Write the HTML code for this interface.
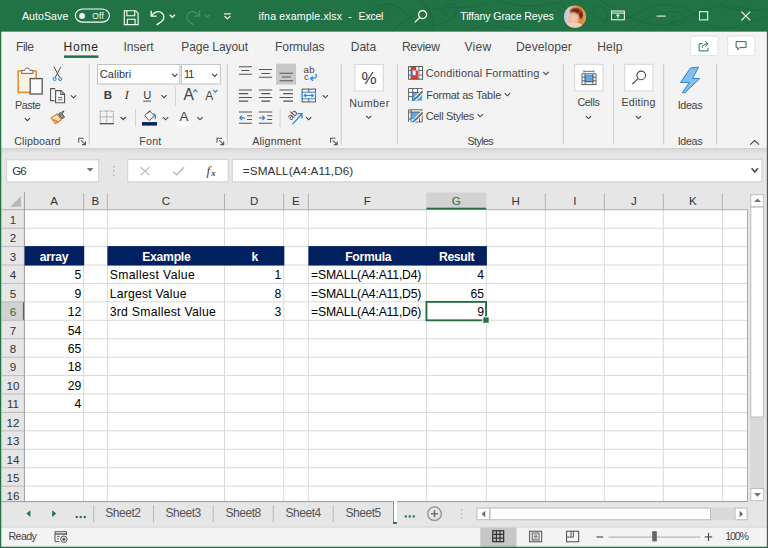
<!DOCTYPE html>
<html><head><meta charset="utf-8"><title>ifna example.xlsx - Excel</title>
<style>
html,body{margin:0;padding:0;}
body{width:768px;height:548px;overflow:hidden;background:#e6e6e6;font-family:"Liberation Sans",sans-serif;position:relative;}
.abs,.t{position:absolute;}
.t{white-space:pre;line-height:1;color:#444;font-size:11px;}
.gl{position:absolute;background:#d6d6d6;}
svg{position:absolute;overflow:visible;pointer-events:none;}
</style></head><body>

<svg style="left:0;top:0" width="768" height="548"><rect x="0.00" y="0.00" width="768.00" height="31.80" fill="#217346"/><g fill="none" stroke="#1d6a3f" stroke-width="1.2" opacity="0.85">
<path d="M368 14 C374 2 390 2 388 12 C386 22 372 20 378 9 C384 0 398 4 406 14 C414 24 430 30 446 22 C458 16 460 6 452 4 C444 2 440 12 448 16"/>
<path d="M392 31 C404 20 420 10 440 8 C462 6 476 10 486 2"/>
<path d="M420 0 C430 10 436 20 432 31"/>
<path d="M470 31 C480 22 500 26 520 30"/>
<path d="M500 0 C512 6 530 8 548 4 C556 2 562 4 566 8"/>
<path d="M584 26 C600 30 612 20 606 10 C600 2 590 6 594 14 C600 24 624 22 640 12 C652 4 668 2 684 8 C700 14 704 26 720 28 C740 30 752 18 768 16"/>
<path d="M600 0 C616 10 640 28 668 24 C690 20 700 6 724 6 C744 6 752 14 768 8"/>
<path d="M630 31 C640 22 652 14 668 12 C684 10 690 20 682 24 C674 28 668 20 676 16"/>
<path d="M716 0 C722 8 734 12 748 8"/>
</g></svg>
<div class="t" style="top:11px;font-size:10.6px;color:#fff;letter-spacing:0.050px;left:22.00px;">AutoSave</div>
<svg style="left:0;top:0" width="768" height="548"><rect x="75.35" y="8.95" width="34.10" height="13.20" rx="7.45" fill="none" stroke="#fff" stroke-width="1.1"/><rect x="79.20" y="13.00" width="5.80" height="5.80" rx="2.90" fill="#fff"/></svg>
<div class="t" style="top:12px;font-size:8.4px;color:#fff;letter-spacing:0.284px;left:92.30px;">Off</div>
<svg style="left:0;top:0" width="768" height="548"><g transform="translate(123.70 10.20)"><g fill="none" stroke="#fff" stroke-width="1.1"><path d="M0.6 0.6 H12 L14.4 3 V14.4 H0.6 Z"/><path d="M3.2 0.6 V5.6 H11 V0.6"/><path d="M3.6 14.4 V9 H11.4 V14.4"/></g></g><g transform="translate(150.00 9.50)"><g fill="none" stroke="#fff" stroke-width="1.3"><path d="M1.2 1.2 V6.6 H6.6"/><path d="M1.6 6.2 C4 2.2 9 1 12 3.6 C15 6.4 14 10 11.6 12 L6.6 15.4"/></g></g><path d="M169.60 14.70 L172.30 17.30 L175.00 14.70" fill="none" stroke="#fff" stroke-width="1.2"/><g transform="translate(185.50 9.50)"><g fill="none" stroke="#4c8d69" stroke-width="1.2"><path d="M14 1.2 V6.6 H8.6"/><path d="M13.6 6.2 C11.2 2.2 6.2 1 3.2 3.6 C0.2 6.4 1.2 10 3.6 12 L8.6 15.4"/></g></g><path d="M204.60 14.70 L207.30 17.30 L210.00 14.70" fill="none" stroke="#4c8d69" stroke-width="1.1"/><g transform="translate(224.00 13.30)"><path d="M0 0.6 H6.8" stroke="#fff" stroke-width="1.1"/><path d="M0.4 2.8 L3.4 5.4 L6.4 2.8" fill="none" stroke="#fff" stroke-width="1.2"/></g></svg>
<div class="t" style="top:11px;font-size:10.6px;color:#fff;letter-spacing:0.146px;left:258.50px;">ifna example.xlsx</div>
<div class="t" style="top:11px;font-size:10.6px;color:#fff;left:348.30px;">-</div>
<div class="t" style="top:11px;font-size:10.6px;color:#fff;letter-spacing:-0.277px;left:358.60px;">Excel</div>
<svg style="left:0;top:0" width="768" height="548"><g transform="translate(414.30 9.90)"><g fill="none" stroke="#fff" stroke-width="1.2"><circle cx="8.3" cy="4.7" r="4"/><path d="M5.4 7.6 L0.5 12.5"/></g></g></svg>
<div class="t" style="top:11px;font-size:10.6px;color:#fff;letter-spacing:-0.132px;left:460.20px;">Tiffany Grace Reyes</div>
<svg style="left:0;top:0" width="768" height="548"><defs><clipPath id="avc"><circle cx="575" cy="16.7" r="11.1"/></clipPath>
<linearGradient id="avbg" x1="0" x2="1" y1="0" y2="0"><stop offset="0" stop-color="#aeb9d6"/><stop offset="0.22" stop-color="#d9d3d6"/><stop offset="0.45" stop-color="#e2a283"/><stop offset="0.72" stop-color="#dd7f35"/><stop offset="1" stop-color="#e7a45c"/></linearGradient>
<radialGradient id="avface"><stop offset="0" stop-color="#f3cdb9"/><stop offset="0.6" stop-color="#eeb9a0"/><stop offset="1" stop-color="#e9a98c" stop-opacity="0"/></radialGradient>
<radialGradient id="avhair"><stop offset="0" stop-color="#4a1c14"/><stop offset="0.6" stop-color="#7a2c1a" stop-opacity="0.9"/><stop offset="1" stop-color="#a84a22" stop-opacity="0"/></radialGradient></defs>
<g clip-path="url(#avc)"><rect x="563" y="5" width="24" height="24" fill="url(#avbg)"/>
<ellipse cx="575.5" cy="11.2" rx="7" ry="4.2" fill="url(#avhair)"/><ellipse cx="581" cy="15" rx="2.6" ry="5" fill="url(#avhair)"/>
<ellipse cx="573.6" cy="18.6" rx="6.4" ry="8" fill="url(#avface)"/><ellipse cx="574.5" cy="26" rx="8" ry="3.4" fill="#f1cdbd"/></g><g transform="translate(611.00 10.50)"><g fill="none" stroke="#fff" stroke-width="1"><rect x="0.5" y="0.5" width="12.8" height="8.8"/><path d="M0.5 2.6 H13.3"/><path d="M6.9 8 V4 M5 5.8 L6.9 3.9 L8.8 5.8"/></g></g><rect x="656.50" y="15.60" width="9.20" height="1.00" fill="#fff"/><rect x="699.50" y="11.70" width="8.20" height="8.20" rx="0.00" fill="none" stroke="#fff" stroke-width="1.0"/><g transform="translate(741.00 11.20)"><path d="M0.4 0.4 L9.2 9.2 M9.2 0.4 L0.4 9.2" stroke="#fff" stroke-width="1.1" fill="none"/></g><rect x="0.00" y="31.80" width="768.00" height="116.40" fill="#f3f3f3"/></svg>
<div class="abs" style="left:0;top:148px;width:768px;height:5px;background:linear-gradient(#d0d0d0,#dadada 40%,#e6e6e6);"></div>
<div class="t" style="top:41px;font-size:12.1px;color:#4a4a4a;letter-spacing:-0.567px;left:16.10px;">File</div>
<div class="t" style="top:41px;font-size:12.1px;color:#262626;letter-spacing:0.745px;left:63.60px;">Home</div>
<div class="t" style="top:41px;font-size:12.1px;color:#4a4a4a;letter-spacing:-0.010px;left:123.40px;">Insert</div>
<div class="t" style="top:41px;font-size:12.1px;color:#4a4a4a;letter-spacing:-0.112px;left:181.30px;">Page Layout</div>
<div class="t" style="top:41px;font-size:12.1px;color:#4a4a4a;letter-spacing:-0.115px;left:275.00px;">Formulas</div>
<div class="t" style="top:41px;font-size:12.1px;color:#4a4a4a;letter-spacing:-0.016px;left:350.70px;">Data</div>
<div class="t" style="top:41px;font-size:12.1px;color:#4a4a4a;letter-spacing:-0.311px;left:401.90px;">Review</div>
<div class="t" style="top:41px;font-size:12.1px;color:#4a4a4a;letter-spacing:0.267px;left:464.40px;">View</div>
<div class="t" style="top:41px;font-size:12.1px;color:#4a4a4a;letter-spacing:0.097px;left:516.00px;">Developer</div>
<div class="t" style="top:41px;font-size:12.1px;color:#4a4a4a;letter-spacing:0.142px;left:597.20px;">Help</div>
<svg style="left:0;top:0" width="768" height="548"><rect x="64.00" y="55.40" width="34.50" height="2.50" fill="#217346"/><rect x="690.70" y="36.10" width="27.30" height="19.60" rx="1.50" fill="#fff" stroke="#e1e1e1" stroke-width="1.0"/><rect x="727.70" y="36.10" width="27.30" height="19.60" rx="1.50" fill="#fff" stroke="#e1e1e1" stroke-width="1.0"/><g transform="translate(698.50 40.50)"><g fill="none" stroke="#217346" stroke-width="1"><path d="M4.2 3.2 H0.6 V10.4 H9.4 V7.2"/><path d="M3.6 7.6 C4 4.6 6 3.4 8.4 3.4 M6.6 0.8 L9.4 3.4 L6.6 6"/></g></g><g transform="translate(735.50 41.00)"><path d="M0.6 0.6 H10.6 V6.6 H4.2 L2.2 8.8 V6.6 H0.6 Z" fill="none" stroke="#217346" stroke-width="1"/></g><rect x="88.60" y="63.70" width="1.25" height="80.90" fill="#d1d1d1"/><rect x="226.80" y="63.70" width="1.25" height="80.90" fill="#d1d1d1"/><rect x="340.70" y="63.70" width="1.25" height="80.90" fill="#d1d1d1"/><rect x="396.80" y="63.70" width="1.25" height="80.90" fill="#d1d1d1"/><rect x="562.80" y="63.70" width="1.25" height="80.90" fill="#d1d1d1"/><rect x="613.00" y="63.70" width="1.25" height="80.90" fill="#d1d1d1"/><rect x="662.90" y="63.70" width="1.25" height="80.90" fill="#d1d1d1"/><rect x="715.90" y="63.70" width="1.25" height="80.90" fill="#d1d1d1"/></svg>
<div class="t" style="top:136px;font-size:10.7px;color:#444;letter-spacing:0.056px;left:14.30px;">Clipboard</div>
<div class="t" style="top:136px;font-size:10.7px;color:#444;letter-spacing:0.203px;left:139.30px;">Font</div>
<div class="t" style="top:136px;font-size:10.7px;color:#444;letter-spacing:0.134px;left:252.30px;">Alignment</div>
<div class="t" style="top:136px;font-size:10.7px;color:#444;letter-spacing:-0.622px;left:467.60px;">Styles</div>
<div class="t" style="top:136px;font-size:10.7px;color:#444;letter-spacing:-0.339px;left:677.70px;">Ideas</div>
<svg style="left:0;top:0" width="768" height="548"><g transform="translate(78.20 137.80)"><g fill="none" stroke="#585858" stroke-width="1.05"><path d="M0.5 5 V0.5 H5.5"/><path d="M2.8 2.6 L7 6.6 M7.2 3.4 V6.8 H3.8"/></g></g><g transform="translate(216.50 137.80)"><g fill="none" stroke="#585858" stroke-width="1.05"><path d="M0.5 5 V0.5 H5.5"/><path d="M2.8 2.6 L7 6.6 M7.2 3.4 V6.8 H3.8"/></g></g><g transform="translate(330.00 137.80)"><g fill="none" stroke="#585858" stroke-width="1.05"><path d="M0.5 5 V0.5 H5.5"/><path d="M2.8 2.6 L7 6.6 M7.2 3.4 V6.8 H3.8"/></g></g><g transform="translate(749.80 140.00)"><path d="M0.4 4.6 L4.8 0.6 L9.2 4.6" fill="none" stroke="#444" stroke-width="1.1"/></g><g transform="translate(17.00 67.00)"><path d="M1.2 4 H19.2 V25.4 H1.2 Z" fill="#fdf3e4" stroke="#e8912d" stroke-width="1.6"/>
<path d="M4.6 6.4 V3.4 H7.6 C7.8 0.2 12.8 0.2 13 3.4 H16 V6.4 Z" fill="#f6f6f6" stroke="#6a6a6a" stroke-width="1"/>
<rect x="13.2" y="11.6" width="12" height="15.4" fill="#fafafa" stroke="#555" stroke-width="1.3"/></g></svg>
<div class="t" style="top:100px;font-size:10.7px;color:#444;letter-spacing:-0.386px;left:15.00px;">Paste</div>
<svg style="left:0;top:0" width="768" height="548"><path d="M24.80 118.15 L27.40 120.65 L30.00 118.15" fill="none" stroke="#444" stroke-width="1.1"/><g transform="translate(52.00 66.30)"><g fill="none" stroke="#555" stroke-width="1"><path d="M2 0.4 L7.6 11.2 M8.8 0.4 L3.2 11.2"/></g><g fill="#cfe6f7" stroke="#2b88d8" stroke-width="1"><circle cx="2.6" cy="12.7" r="1.6"/><circle cx="8.2" cy="12.7" r="1.6"/></g></g><g transform="translate(50.00 88.00)"><g fill="#f8f8f8" stroke="#555" stroke-width="1.1"><path d="M4.6 1.6 V0.6 H0.6 V12.6 H4.6"/><path d="M5.6 2.6 H11 L14.6 6.2 V14.8 H5.6 Z"/><path d="M10.8 2.8 V6.4 H14.4" fill="none"/><path d="M8 9.6 H12.4 M8 11.8 H12.4" fill="none" stroke-width="0.9"/></g></g><path d="M70.90 95.35 L73.50 97.85 L76.10 95.35" fill="none" stroke="#444" stroke-width="1.1"/><g transform="translate(50.00 110.50)"><path d="M1 7.4 L7 3.4 L11.4 9.4 L5.4 13.2 Z" fill="#fbe3c7" stroke="#e8822d" stroke-width="1.2"/><path d="M3.4 9 L8.6 12" stroke="#e8822d" stroke-width="1.6" fill="none"/>
<path d="M8.4 3.6 L11 1.8 L14.6 6.6 L12 8.4 Z" fill="#8a8a8a" stroke="#555" stroke-width="0.9"/><path d="M12 2 L14 0.6" stroke="#555" stroke-width="1.6"/></g><rect x="97.50" y="64.50" width="82.40" height="19.50" rx="0.00" fill="#fff" stroke="#c4c4c4" stroke-width="1.0"/><rect x="181.50" y="64.50" width="38.80" height="19.50" rx="0.00" fill="#fff" stroke="#c4c4c4" stroke-width="1.0"/></svg>
<div class="t" style="top:69px;font-size:10.899999999999999px;color:#333;letter-spacing:0.087px;left:99.80px;">Calibri</div>
<svg style="left:0;top:0" width="768" height="548"><path d="M172.20 73.90 L174.80 76.50 L177.40 73.90" fill="none" stroke="#444" stroke-width="1.1"/></svg>
<div class="t" style="top:69px;font-size:10.899999999999999px;color:#333;letter-spacing:-1.113px;left:184.00px;">11</div>
<svg style="left:0;top:0" width="768" height="548"><path d="M212.10 73.90 L214.70 76.50 L217.30 73.90" fill="none" stroke="#444" stroke-width="1.1"/></svg>
<div class="t" style="top:90px;font-size:11.5px;color:#3b3b3b;font-weight:bold;left:103.80px;">B</div>
<div class="t" style="top:88px;font-size:13.2px;color:#3b3b3b;font-family:'Liberation Serif',serif;font-style:italic;left:124.40px;">I</div>
<div class="t" style="top:90px;font-size:11.2px;color:#3b3b3b;left:143.20px;">U</div>
<svg style="left:0;top:0" width="768" height="548"><rect x="143.20" y="100.60" width="7.80" height="1.00" fill="#555"/><path d="M161.50 95.10 L164.10 97.70 L166.70 95.10" fill="none" stroke="#444" stroke-width="1.1"/><rect x="175.00" y="87.00" width="1.00" height="18.50" fill="#d2d2d2"/></svg>
<div class="t" style="top:87px;font-size:15.6px;color:#444;left:183.50px;">A</div>
<svg style="left:0;top:0" width="768" height="548"><g transform="translate(193.00 89.40)"><path d="M0.4 2.7 L2.4 0.5 L4.4 2.7" fill="none" stroke="#2b88d8" stroke-width="1.2"/></g></svg>
<div class="t" style="top:90px;font-size:12px;color:#444;left:205.20px;">A</div>
<svg style="left:0;top:0" width="768" height="548"><g transform="translate(213.00 89.60)"><path d="M0.4 0.4 L2.4 2.6 L4.4 0.4" fill="none" stroke="#2b88d8" stroke-width="1.2"/></g><g transform="translate(99.70 110.50)"><g stroke="#8c8c8c" stroke-width="1" stroke-dasharray="1.2 0.9" fill="none"><path d="M0.5 0.5 H13.6 M0.5 0.5 V12 M13.6 0.5 V12 M7 0.5 V12 M0.5 6.4 H13.6"/></g><path d="M0 13.2 H14.2" stroke="#444" stroke-width="1.2"/></g><path d="M120.60 117.00 L123.20 119.60 L125.80 117.00" fill="none" stroke="#444" stroke-width="1.1"/><rect x="135.00" y="109.00" width="1.00" height="18.00" fill="#d2d2d2"/><g transform="translate(142.00 110.30)"><path d="M7.6 0.6 L12.6 5.6 L7.2 10.2 L2.6 5.4 Z" fill="#fafafa" stroke="#555" stroke-width="1"/><path d="M5.4 2.6 L8.8 0.6" stroke="#555" stroke-width="1" fill="none"/>
<path d="M11.6 3.4 C13.4 4.6 13.8 6.6 13.2 8.6" fill="none" stroke="#2b88d8" stroke-width="1.5"/>
<rect x="0" y="11.8" width="15" height="3.5" fill="#002060"/></g><path d="M163.00 117.20 L165.60 119.80 L168.20 117.20" fill="none" stroke="#444" stroke-width="1.1"/></svg>
<div class="t" style="top:110px;font-size:13.4px;color:#444;left:179.40px;">A</div>
<svg style="left:0;top:0" width="768" height="548"><rect x="176.50" y="122.00" width="14.50" height="3.50" fill="#fff"/><path d="M197.40 117.20 L200.00 119.80 L202.60 117.20" fill="none" stroke="#444" stroke-width="1.1"/><path d="M238.90 66.75 H252.00 M241.40 70.50 H249.50 M238.90 74.25 H252.00 " stroke="#555" stroke-width="1.05" fill="none"/><path d="M258.90 69.50 H272.20 M261.40 73.50 H270.10 M258.90 77.30 H272.20 " stroke="#555" stroke-width="1.05" fill="none"/><rect x="276.00" y="63.70" width="20.00" height="20.80" fill="#c8c8c8"/><path d="M279.50 73.20 H293.00 M282.00 77.00 H290.70 M279.50 80.70 H293.00 " stroke="#555" stroke-width="1.05" fill="none"/></svg>
<div class="t" style="top:65px;font-size:9.6px;color:#444;letter-spacing:0.328px;left:303.60px;">ab</div>
<div class="t" style="top:72px;font-size:9.6px;color:#444;left:303.90px;">c</div>
<svg style="left:0;top:0" width="768" height="548"><g transform="translate(309.40 73.60)"><path d="M6.2 0.4 C8 2.6 7 5 1.4 5 M3.6 2.8 L1.2 5 L3.6 7.2" fill="none" stroke="#2b88d8" stroke-width="1.3"/></g><path d="M238.90 89.90 H252.00 M238.90 93.60 H248.20 M238.90 97.40 H252.00 M238.90 101.10 H248.20 " stroke="#555" stroke-width="1.05" fill="none"/><path d="M258.90 89.90 H272.20 M261.40 93.60 H270.10 M258.90 97.40 H272.20 M261.40 101.10 H270.10 " stroke="#555" stroke-width="1.05" fill="none"/><path d="M279.50 89.90 H293.00 M283.20 93.60 H293.00 M279.50 97.40 H293.00 M283.20 101.10 H293.00 " stroke="#555" stroke-width="1.05" fill="none"/><g transform="translate(301.70 88.60)"><rect x="0.5" y="0.5" width="13.3" height="12.8" fill="#f8f8f8" stroke="#555" stroke-width="1"/><rect x="0.5" y="3.6" width="13.3" height="6.6" fill="#eaf3fb" stroke="#2b88d8" stroke-width="1"/><path d="M7.1 0.5 V3.4 M7.1 10.4 V13.2" stroke="#555" stroke-width="1"/><path d="M2.6 6.9 H11.6 M4.4 5.2 L2.6 6.9 L4.4 8.6 M9.8 5.2 L11.6 6.9 L9.8 8.6" fill="none" stroke="#2b88d8" stroke-width="1.1"/></g><path d="M322.70 95.20 L325.30 97.80 L327.90 95.20" fill="none" stroke="#444" stroke-width="1.1"/><path d="M238.90 112.00 H252.00 M247.00 115.75 H252.00 M247.00 119.50 H252.00 M238.90 123.25 H252.00 " stroke="#555" stroke-width="1.05" fill="none"/><g transform="translate(239.20 115.20)"><path d="M0.6 2.6 H6 M2.8 0.4 L0.6 2.6 L2.8 4.8" fill="none" stroke="#2b88d8" stroke-width="1.2"/></g><path d="M258.90 112.00 H272.20 M267.20 115.75 H272.20 M267.20 119.50 H272.20 M258.90 123.25 H272.20 " stroke="#555" stroke-width="1.05" fill="none"/><g transform="translate(259.20 115.20)"><path d="M0 2.6 H5.4 M3.2 0.4 L5.4 2.6 L3.2 4.8" fill="none" stroke="#2b88d8" stroke-width="1.2"/></g><rect x="279.60" y="109.00" width="1.00" height="18.00" fill="#d2d2d2"/></svg>
<div class="t" style="left:286.6px;top:110.4px;font-size:9.4px;color:#444;transform:rotate(-48deg);transform-origin:50% 50%;letter-spacing:-0.2px;">ab</div>
<svg style="left:0;top:0" width="768" height="548"><g transform="translate(292.00 112.80)"><path d="M0.4 11.6 L9.8 1.2 M5.4 0.9 H10 V5.6" fill="none" stroke="#2b88d8" stroke-width="1.25"/></g><path d="M306.10 117.20 L308.70 119.80 L311.30 117.20" fill="none" stroke="#444" stroke-width="1.1"/><rect x="354.90" y="64.40" width="28.40" height="26.60" rx="0.00" fill="#fff" stroke="#d4d4d4" stroke-width="1.0"/></svg>
<div class="t" style="top:70px;font-size:17px;color:#3a3a3a;letter-spacing:0.000px;left:361.40px;">%</div>
<div class="t" style="top:98px;font-size:10.7px;color:#444;letter-spacing:0.397px;left:349.20px;">Number</div>
<svg style="left:0;top:0" width="768" height="548"><path d="M366.10 115.85 L368.70 118.35 L371.30 115.85" fill="none" stroke="#444" stroke-width="1.1"/><g transform="translate(408.10 66.10)"><rect x="0.5" y="0.5" width="14" height="12.6" fill="#fafafa"/>
<rect x="3.0" y="0.5" width="4.6" height="3.9" fill="#e8363d"/><rect x="3.0" y="9.0" width="6.9" height="4.1" fill="#e8363d"/><rect x="7.5" y="4.4" width="2.4" height="4.7" fill="#e8363d"/><rect x="3.0" y="4.4" width="1.7" height="4.6" fill="#2b88d8"/>
<g fill="none" stroke="#4f4f4f" stroke-width="0.95"><rect x="0.5" y="0.5" width="14" height="12.6"/><path d="M3.0 0.5 V13.1 M10.8 0.5 V13.1 M0.5 4.4 H3.0 M0.5 9.0 H3.0 M10.8 4.4 H14.5 M10.8 9.0 H14.5 M7.6 0.5 V4.4" stroke-width="0.8"/></g></g></svg>
<div class="t" style="top:68px;font-size:10.899999999999999px;color:#444;letter-spacing:0.182px;left:425.80px;">Conditional Formatting</div>
<svg style="left:0;top:0" width="768" height="548"><path d="M543.30 72.00 L546.00 74.60 L548.70 72.00" fill="none" stroke="#444" stroke-width="1.1"/><g transform="translate(408.10 88.00)"><rect x="0.5" y="0.5" width="13.6" height="12.2" fill="#fafafa"/><rect x="4.6" y="4.4" width="9.5" height="8.3" fill="#5ea8e6"/>
<g fill="none" stroke="#555" stroke-width="0.9"><path d="M0.5 12.7 V0.5 H14.1 V4.4 M0.5 4.4 H14.1 M4.6 0.5 V12.7 M9.4 0.5 V4.4 M0.5 8.6 H4.6"/></g>
<path d="M14.2 3.6 L7.6 10.4" stroke="#fafafa" stroke-width="3.8" stroke-linecap="round"/><path d="M14.0 3.8 L8.4 9.6" stroke="#6a6a6a" stroke-width="1.9" stroke-linecap="round"/><path d="M8.8 10.4 L5.6 12.9 L3.2 13.2 L5.6 10.6 L7.4 8.8 Z" fill="#2b88d8"/></g></svg>
<div class="t" style="top:90px;font-size:10.899999999999999px;color:#444;letter-spacing:-0.206px;left:426.20px;">Format as Table</div>
<svg style="left:0;top:0" width="768" height="548"><path d="M504.70 93.20 L507.40 95.80 L510.10 93.20" fill="none" stroke="#444" stroke-width="1.1"/><g transform="translate(408.10 109.25)"><rect x="0.5" y="0.5" width="13.6" height="12.2" fill="#fafafa"/><rect x="3" y="2.8" width="8.4" height="7" fill="#5ea8e6"/>
<g fill="none" stroke="#555" stroke-width="0.9"><path d="M0.5 12.7 V0.5 H14.1 V12.7 H7 M0.5 2.8 H14.1 M3 0.5 V12.7 M11.4 2.8 V12.7 M0.5 9.8 H3"/></g>
<path d="M14.2 3.6 L7.6 10.4" stroke="#fafafa" stroke-width="3.8" stroke-linecap="round"/><path d="M14.0 3.8 L8.4 9.6" stroke="#6a6a6a" stroke-width="1.9" stroke-linecap="round"/><path d="M8.8 10.4 L5.6 12.9 L3.2 13.2 L5.6 10.6 L7.4 8.8 Z" fill="#2b88d8"/></g></svg>
<div class="t" style="top:111px;font-size:10.899999999999999px;color:#444;letter-spacing:-0.305px;left:425.80px;">Cell Styles</div>
<svg style="left:0;top:0" width="768" height="548"><path d="M477.50 114.20 L480.20 116.80 L482.90 114.20" fill="none" stroke="#444" stroke-width="1.1"/><rect x="574.70" y="64.30" width="28.20" height="26.70" rx="0.00" fill="#fff" stroke="#d4d4d4" stroke-width="1.0"/><g transform="translate(581.50 70.20)"><path d="M2.4 1.2 H12.4 M2.4 0 V2.4 M12.4 0 V2.4" stroke="#2b88d8" stroke-width="1" fill="none"/>
<rect x="0.5" y="3.6" width="14" height="10.8" fill="#fafafa" stroke="#555" stroke-width="0.9"/><rect x="3.6" y="5" width="7.8" height="6.4" fill="#5ea8e6" stroke="#2b88d8" stroke-width="0.8"/>
<path d="M3.6 3.6 V14.4 M11.4 3.6 V14.4 M0.5 7 H3.6 M0.5 10.6 H3.6 M11.4 7 H14.5 M11.4 10.6 H14.5 M3.6 11.6 H11.4" stroke="#555" stroke-width="0.9" fill="none"/></g></svg>
<div class="t" style="top:97px;font-size:10.7px;color:#444;letter-spacing:-0.341px;left:577.40px;">Cells</div>
<svg style="left:0;top:0" width="768" height="548"><path d="M585.90 116.05 L588.50 118.55 L591.10 116.05" fill="none" stroke="#444" stroke-width="1.1"/><rect x="624.70" y="64.30" width="28.20" height="26.70" rx="0.00" fill="#fff" stroke="#d4d4d4" stroke-width="1.0"/><g transform="translate(631.80 70.40)"><g fill="none" stroke="#444" stroke-width="1.1"><circle cx="9.4" cy="5" r="4.3"/><path d="M6.3 8.2 L0.6 13.6"/></g></g></svg>
<div class="t" style="top:97px;font-size:10.7px;color:#444;letter-spacing:0.219px;left:621.40px;">Editing</div>
<svg style="left:0;top:0" width="768" height="548"><path d="M635.80 116.05 L638.40 118.55 L641.00 116.05" fill="none" stroke="#444" stroke-width="1.1"/><path d="M690.5 68 L698.6 67.1 L692.6 78.5 L699.8 78.5 L685 92.7 L682.3 92.7 L689.3 82.5 L680.5 82.5 Z" fill="#83beec" stroke="#2b88d8" stroke-width="1" stroke-linejoin="round"/></svg>
<div class="t" style="top:100px;font-size:10.7px;color:#444;letter-spacing:-0.339px;left:677.70px;">Ideas</div>
<svg style="left:0;top:0" width="768" height="548"><rect x="6.70" y="159.80" width="92.00" height="22.00" rx="0.00" fill="#fff" stroke="#d0d0d0" stroke-width="1.0"/></svg>
<div class="t" style="top:165px;font-size:11.6px;color:#333;letter-spacing:-0.869px;left:12.20px;">G6</div>
<svg style="left:0;top:0" width="768" height="548"><g transform="translate(86.70 168.10)"><path d="M0 0 H6.8 L3.4 3.7 Z" fill="#777"/></g><rect x="113.00" y="165.90" width="1.60" height="1.60" rx="0.80" fill="#a8a8a8"/><rect x="113.00" y="170.20" width="1.60" height="1.60" rx="0.80" fill="#a8a8a8"/><rect x="113.00" y="174.50" width="1.60" height="1.60" rx="0.80" fill="#a8a8a8"/><rect x="127.70" y="159.30" width="100.50" height="22.50" rx="0.00" fill="#fff" stroke="#d0d0d0" stroke-width="1.0"/><g transform="translate(140.20 166.70)"><path d="M0.4 0.4 L9.2 8.4 M9.2 0.4 L0.4 8.4" stroke="#b4b4b4" stroke-width="1.2" fill="none"/></g><g transform="translate(172.70 166.70)"><path d="M0.5 5 L4 8.2 L11.4 0.5" stroke="#b4b4b4" stroke-width="1.3" fill="none"/></g></svg>
<div class="t" style="top:164px;font-size:13.4px;color:#444;font-family:'Liberation Serif',serif;font-style:italic;left:206.60px;">f</div>
<div class="t" style="top:169px;font-size:8.6px;color:#444;font-family:'Liberation Serif',serif;font-weight:bold;font-style:italic;left:211.20px;">x</div>
<svg style="left:0;top:0" width="768" height="548"><rect x="232.30" y="159.30" width="529.50" height="22.50" rx="0.00" fill="#fff" stroke="#d0d0d0" stroke-width="1.0"/></svg>
<div class="t" style="top:165px;font-size:11.7px;color:#333;letter-spacing:0.113px;left:242.80px;">=SMALL(A4:A11,D6)</div>
<svg style="left:0;top:0" width="768" height="548"><path d="M751.60 168.30 L754.80 171.90 L758.00 168.30" fill="none" stroke="#555" stroke-width="1.7"/><rect x="24.50" y="209.70" width="723.00" height="291.70" fill="#fff"/><g transform="translate(9.60 195.40)"><path d="M11.4 0.6 V11.4 H0.6 Z" fill="#b8b8b8"/></g><rect x="426.30" y="192.50" width="60.00" height="17.20" fill="#d2d2d2"/><rect x="426.30" y="207.70" width="60.00" height="2.00" fill="#217346"/><rect x="1.50" y="301.85" width="23.00" height="18.43" fill="#d2d2d2"/><rect x="22.90" y="301.85" width="2.00" height="18.43" fill="#217346"/><rect x="83.10" y="209.70" width="1.00" height="291.70" fill="#d9d9d9"/><rect x="106.80" y="209.70" width="1.00" height="291.70" fill="#d9d9d9"/><rect x="224.00" y="209.70" width="1.00" height="291.70" fill="#d9d9d9"/><rect x="283.20" y="209.70" width="1.00" height="291.70" fill="#d9d9d9"/><rect x="307.80" y="209.70" width="1.00" height="291.70" fill="#d9d9d9"/><rect x="425.80" y="209.70" width="1.00" height="291.70" fill="#d9d9d9"/><rect x="485.80" y="209.70" width="1.00" height="291.70" fill="#d9d9d9"/><rect x="544.80" y="209.70" width="1.00" height="291.70" fill="#d9d9d9"/><rect x="603.80" y="209.70" width="1.00" height="291.70" fill="#d9d9d9"/><rect x="662.80" y="209.70" width="1.00" height="291.70" fill="#d9d9d9"/><rect x="721.80" y="209.70" width="1.00" height="291.70" fill="#d9d9d9"/><rect x="24.00" y="193.50" width="1.00" height="16.20" fill="#b2b2b2"/><rect x="83.10" y="193.50" width="1.00" height="16.20" fill="#b2b2b2"/><rect x="106.80" y="193.50" width="1.00" height="16.20" fill="#b2b2b2"/><rect x="224.00" y="193.50" width="1.00" height="16.20" fill="#b2b2b2"/><rect x="283.20" y="193.50" width="1.00" height="16.20" fill="#b2b2b2"/><rect x="307.80" y="193.50" width="1.00" height="16.20" fill="#b2b2b2"/><rect x="544.80" y="193.50" width="1.00" height="16.20" fill="#b2b2b2"/><rect x="603.80" y="193.50" width="1.00" height="16.20" fill="#b2b2b2"/><rect x="662.80" y="193.50" width="1.00" height="16.20" fill="#b2b2b2"/><rect x="721.80" y="193.50" width="1.00" height="16.20" fill="#b2b2b2"/><rect x="24.50" y="227.63" width="723.00" height="1.00" fill="#d9d9d9"/><rect x="1.50" y="227.63" width="23.00" height="1.00" fill="#bcbcbc"/><rect x="24.50" y="246.06" width="723.00" height="1.00" fill="#d9d9d9"/><rect x="1.50" y="246.06" width="23.00" height="1.00" fill="#bcbcbc"/><rect x="24.50" y="264.49" width="723.00" height="1.00" fill="#d9d9d9"/><rect x="1.50" y="264.49" width="23.00" height="1.00" fill="#bcbcbc"/><rect x="24.50" y="282.92" width="723.00" height="1.00" fill="#d9d9d9"/><rect x="1.50" y="282.92" width="23.00" height="1.00" fill="#bcbcbc"/><rect x="24.50" y="301.35" width="723.00" height="1.00" fill="#d9d9d9"/><rect x="1.50" y="301.35" width="23.00" height="1.00" fill="#bcbcbc"/><rect x="24.50" y="319.78" width="723.00" height="1.00" fill="#d9d9d9"/><rect x="1.50" y="319.78" width="23.00" height="1.00" fill="#bcbcbc"/><rect x="24.50" y="338.21" width="723.00" height="1.00" fill="#d9d9d9"/><rect x="1.50" y="338.21" width="23.00" height="1.00" fill="#bcbcbc"/><rect x="24.50" y="356.64" width="723.00" height="1.00" fill="#d9d9d9"/><rect x="1.50" y="356.64" width="23.00" height="1.00" fill="#bcbcbc"/><rect x="24.50" y="375.07" width="723.00" height="1.00" fill="#d9d9d9"/><rect x="1.50" y="375.07" width="23.00" height="1.00" fill="#bcbcbc"/><rect x="24.50" y="393.50" width="723.00" height="1.00" fill="#d9d9d9"/><rect x="1.50" y="393.50" width="23.00" height="1.00" fill="#bcbcbc"/><rect x="24.50" y="411.93" width="723.00" height="1.00" fill="#d9d9d9"/><rect x="1.50" y="411.93" width="23.00" height="1.00" fill="#bcbcbc"/><rect x="24.50" y="430.36" width="723.00" height="1.00" fill="#d9d9d9"/><rect x="1.50" y="430.36" width="23.00" height="1.00" fill="#bcbcbc"/><rect x="24.50" y="448.79" width="723.00" height="1.00" fill="#d9d9d9"/><rect x="1.50" y="448.79" width="23.00" height="1.00" fill="#bcbcbc"/><rect x="24.50" y="467.22" width="723.00" height="1.00" fill="#d9d9d9"/><rect x="1.50" y="467.22" width="23.00" height="1.00" fill="#bcbcbc"/><rect x="24.50" y="485.65" width="723.00" height="1.00" fill="#d9d9d9"/><rect x="1.50" y="485.65" width="23.00" height="1.00" fill="#bcbcbc"/><rect x="1.50" y="209.10" width="424.80" height="1.10" fill="#b2b2b2"/><rect x="486.30" y="209.10" width="261.20" height="1.10" fill="#b2b2b2"/><rect x="23.90" y="192.30" width="1.10" height="309.10" fill="#a4a4a4"/><rect x="747.00" y="209.70" width="1.00" height="291.70" fill="#ababab"/></svg>
<div class="t" style="top:195px;font-size:11.6px;color:#333;left:24.50px;width:59.10px;text-align:center;">A</div>
<div class="t" style="top:195px;font-size:11.6px;color:#333;left:83.60px;width:23.70px;text-align:center;">B</div>
<div class="t" style="top:195px;font-size:11.6px;color:#333;left:107.30px;width:117.20px;text-align:center;">C</div>
<div class="t" style="top:195px;font-size:11.6px;color:#333;left:224.50px;width:59.20px;text-align:center;">D</div>
<div class="t" style="top:195px;font-size:11.6px;color:#333;left:283.70px;width:24.60px;text-align:center;">E</div>
<div class="t" style="top:195px;font-size:11.6px;color:#333;left:308.30px;width:118.00px;text-align:center;">F</div>
<div class="t" style="top:195px;font-size:11.6px;color:#217346;left:426.30px;width:60.00px;text-align:center;">G</div>
<div class="t" style="top:195px;font-size:11.6px;color:#333;left:486.30px;width:59.00px;text-align:center;">H</div>
<div class="t" style="top:195px;font-size:11.6px;color:#333;left:545.30px;width:59.00px;text-align:center;">I</div>
<div class="t" style="top:195px;font-size:11.6px;color:#333;left:604.30px;width:59.00px;text-align:center;">J</div>
<div class="t" style="top:195px;font-size:11.6px;color:#333;left:663.30px;width:59.00px;text-align:center;">K</div>
<div class="t" style="top:214px;font-size:11.6px;color:#333;left:1.50px;width:23.00px;text-align:center;">1</div>
<div class="t" style="top:232px;font-size:11.6px;color:#333;left:1.50px;width:23.00px;text-align:center;">2</div>
<div class="t" style="top:251px;font-size:11.6px;color:#333;left:1.50px;width:23.00px;text-align:center;">3</div>
<div class="t" style="top:269px;font-size:11.6px;color:#333;left:1.50px;width:23.00px;text-align:center;">4</div>
<div class="t" style="top:288px;font-size:11.6px;color:#333;left:1.50px;width:23.00px;text-align:center;">5</div>
<div class="t" style="top:306px;font-size:11.6px;color:#217346;left:1.50px;width:23.00px;text-align:center;">6</div>
<div class="t" style="top:325px;font-size:11.6px;color:#333;left:1.50px;width:23.00px;text-align:center;">7</div>
<div class="t" style="top:343px;font-size:11.6px;color:#333;left:1.50px;width:23.00px;text-align:center;">8</div>
<div class="t" style="top:361px;font-size:11.6px;color:#333;left:1.50px;width:23.00px;text-align:center;">9</div>
<div class="t" style="top:380px;font-size:11.6px;color:#333;left:1.50px;width:23.00px;text-align:center;">10</div>
<div class="t" style="top:398px;font-size:11.6px;color:#333;left:1.50px;width:23.00px;text-align:center;">11</div>
<div class="t" style="top:417px;font-size:11.6px;color:#333;left:1.50px;width:23.00px;text-align:center;">12</div>
<div class="t" style="top:435px;font-size:11.6px;color:#333;left:1.50px;width:23.00px;text-align:center;">13</div>
<div class="t" style="top:454px;font-size:11.6px;color:#333;left:1.50px;width:23.00px;text-align:center;">14</div>
<div class="t" style="top:472px;font-size:11.6px;color:#333;left:1.50px;width:23.00px;text-align:center;">15</div>
<div class="t" style="top:490px;font-size:11.6px;color:#333;left:1.50px;width:23.00px;text-align:center;">16</div>
<svg style="left:0;top:0" width="768" height="548"><rect x="24.60" y="246.11" width="59.60" height="19.43" fill="#002060"/><rect x="107.40" y="246.11" width="176.90" height="19.43" fill="#002060"/><rect x="308.40" y="246.11" width="178.50" height="19.43" fill="#002060"/></svg>
<div class="t" style="top:251px;font-size:12.2px;color:#fff;font-weight:bold;letter-spacing:-0.232px;left:39.70px;">array</div>
<div class="t" style="top:251px;font-size:12.2px;color:#fff;font-weight:bold;letter-spacing:-0.257px;left:142.20px;">Example</div>
<div class="t" style="top:251px;font-size:12.2px;color:#fff;font-weight:bold;left:251.45px;">k</div>
<div class="t" style="top:251px;font-size:12.2px;color:#fff;font-weight:bold;letter-spacing:-0.288px;left:345.20px;">Formula</div>
<div class="t" style="top:251px;font-size:12.2px;color:#fff;font-weight:bold;letter-spacing:-0.330px;left:438.95px;">Result</div>
<div class="t" style="top:269px;font-size:12.2px;color:#000;left:74.52px;">5</div>
<div class="t" style="top:288px;font-size:12.2px;color:#000;left:74.52px;">9</div>
<div class="t" style="top:306px;font-size:12.2px;color:#000;left:67.74px;">12</div>
<div class="t" style="top:325px;font-size:12.2px;color:#000;left:67.74px;">54</div>
<div class="t" style="top:343px;font-size:12.2px;color:#000;left:67.74px;">65</div>
<div class="t" style="top:361px;font-size:12.2px;color:#000;left:67.74px;">18</div>
<div class="t" style="top:380px;font-size:12.2px;color:#000;left:67.74px;">29</div>
<div class="t" style="top:398px;font-size:12.2px;color:#000;left:74.52px;">4</div>
<div class="t" style="top:269px;font-size:12.2px;color:#000;letter-spacing:0.362px;left:109.70px;">Smallest Value</div>
<div class="t" style="top:269px;font-size:12.2px;color:#000;left:274.62px;">1</div>
<div class="t" style="top:269px;font-size:12.2px;color:#000;letter-spacing:-0.178px;left:311.00px;">=SMALL(A4:A11,D4)</div>
<div class="t" style="top:269px;font-size:12.2px;color:#000;left:477.22px;">4</div>
<div class="t" style="top:288px;font-size:12.2px;color:#000;letter-spacing:0.207px;left:109.70px;">Largest Value</div>
<div class="t" style="top:288px;font-size:12.2px;color:#000;left:274.62px;">8</div>
<div class="t" style="top:288px;font-size:12.2px;color:#000;letter-spacing:-0.178px;left:311.00px;">=SMALL(A4:A11,D5)</div>
<div class="t" style="top:288px;font-size:12.2px;color:#000;left:470.44px;">65</div>
<div class="t" style="top:306px;font-size:12.2px;color:#000;letter-spacing:0.277px;left:109.70px;">3rd Smallest Value</div>
<div class="t" style="top:306px;font-size:12.2px;color:#000;left:274.62px;">3</div>
<div class="t" style="top:306px;font-size:12.2px;color:#000;letter-spacing:-0.178px;left:311.00px;">=SMALL(A4:A11,D6)</div>
<div class="t" style="top:306px;font-size:12.2px;color:#000;left:477.22px;">9</div>
<svg style="left:0;top:0" width="768" height="548"><rect x="426.45" y="301.90" width="59.60" height="18.43" rx="0.00" fill="none" stroke="#217346" stroke-width="1.9"/><rect x="482.80" y="316.88" width="6.40" height="6.40" rx="0.00" fill="#217346" stroke="#fff" stroke-width="1.0"/><rect x="750.30" y="207.00" width="13.80" height="281.00" fill="#d9d9d9"/><rect x="750.80" y="207.00" width="12.80" height="210.00" rx="0.00" fill="#fff" stroke="#bebebe" stroke-width="1.0"/><rect x="750.80" y="194.70" width="12.80" height="12.00" rx="0.00" fill="#fff" stroke="#bebebe" stroke-width="1.0"/><g transform="translate(753.90 198.30)"><path d="M0 3.8 H7.2 L3.6 0.1 Z" fill="#777"/></g><rect x="750.80" y="488.50" width="12.80" height="12.20" rx="0.00" fill="#fff" stroke="#bebebe" stroke-width="1.0"/><g transform="translate(753.90 492.90)"><path d="M0 0.2 H7.2 L3.6 3.9 Z" fill="#777"/></g><rect x="1.50" y="501.00" width="392.00" height="1.10" fill="#a2a2a2"/><rect x="397.00" y="501.00" width="351.00" height="1.10" fill="#a2a2a2"/><g transform="translate(26.20 510.00)"><path d="M4.2 0.2 V7 L0.3 3.6 Z" fill="#217346"/></g><g transform="translate(52.00 510.00)"><path d="M0.2 0.2 V7 L4.1 3.6 Z" fill="#217346"/></g><rect x="75.70" y="516.00" width="2.10" height="2.10" fill="#217346"/><rect x="79.70" y="516.00" width="2.10" height="2.10" fill="#217346"/><rect x="83.70" y="516.00" width="2.10" height="2.10" fill="#217346"/><rect x="404.70" y="515.40" width="2.10" height="2.10" fill="#217346"/><rect x="408.70" y="515.40" width="2.10" height="2.10" fill="#217346"/><rect x="412.70" y="515.40" width="2.10" height="2.10" fill="#217346"/><rect x="93.25" y="505.00" width="1.00" height="17.50" fill="#b8b8b8"/><rect x="153.00" y="505.00" width="1.00" height="17.50" fill="#b8b8b8"/><rect x="212.75" y="505.00" width="1.00" height="17.50" fill="#b8b8b8"/><rect x="272.75" y="505.00" width="1.00" height="17.50" fill="#b8b8b8"/><rect x="332.75" y="505.00" width="1.00" height="17.50" fill="#b8b8b8"/></svg>
<div class="t" style="top:507px;font-size:12.0px;color:#555;letter-spacing:-0.449px;left:105.20px;">Sheet2</div>
<div class="t" style="top:507px;font-size:12.0px;color:#555;letter-spacing:-0.449px;left:165.45px;">Sheet3</div>
<div class="t" style="top:507px;font-size:12.0px;color:#555;letter-spacing:-0.449px;left:225.45px;">Sheet8</div>
<div class="t" style="top:507px;font-size:12.0px;color:#555;letter-spacing:-0.449px;left:285.45px;">Sheet4</div>
<div class="t" style="top:507px;font-size:12.0px;color:#555;letter-spacing:-0.449px;left:345.45px;">Sheet5</div>
<svg style="left:0;top:0" width="768" height="548"><rect x="393.90" y="501.00" width="3.00" height="21.40" fill="#fff"/><rect x="393.00" y="501.30" width="1.00" height="21.00" fill="#8e8e8e"/><rect x="393.00" y="521.90" width="3.90" height="2.00" fill="#217346"/><g transform="translate(427.00 506.20)"><circle cx="7.5" cy="7.5" r="6.8" fill="none" stroke="#969696" stroke-width="1.4"/><path d="M4 7.5 H11 M7.5 4 V11" stroke="#6e6e6e" stroke-width="1.5"/></g><rect x="460.80" y="509.20" width="1.60" height="1.60" rx="0.80" fill="#b0b0b0"/><rect x="460.80" y="513.20" width="1.60" height="1.60" rx="0.80" fill="#b0b0b0"/><rect x="460.80" y="517.20" width="1.60" height="1.60" rx="0.80" fill="#b0b0b0"/><rect x="476.50" y="507.60" width="271.00" height="12.60" fill="#d9d9d9"/><rect x="490.00" y="508.10" width="220.50" height="11.60" rx="0.00" fill="#fff" stroke="#bebebe" stroke-width="1.0"/><rect x="477.00" y="508.10" width="12.60" height="11.60" rx="0.00" fill="#fff" stroke="#bebebe" stroke-width="1.0"/><g transform="translate(481.40 510.60)"><path d="M3.8 0.2 V6.6 L0.3 3.4 Z" fill="#666"/></g><rect x="735.10" y="508.10" width="12.00" height="11.60" rx="0.00" fill="#fff" stroke="#bebebe" stroke-width="1.0"/><g transform="translate(739.40 510.60)"><path d="M0.2 0.2 V6.6 L3.7 3.4 Z" fill="#666"/></g><rect x="0.00" y="527.00" width="768.00" height="21.00" fill="#f3f3f3"/><rect x="0.00" y="526.60" width="768.00" height="1.00" fill="#d4d4d4"/></svg>
<div class="t" style="top:531px;font-size:10.7px;color:#444;letter-spacing:-0.627px;left:8.50px;">Ready</div>
<svg style="left:0;top:0" width="768" height="548"><g transform="translate(54.50 531.20)"><g fill="none" stroke="#555" stroke-width="1"><path d="M5 10.4 H0.5 V0.5 H12 V4"/><path d="M0.5 2.8 H12" stroke-width="1.4"/><path d="M2.4 5.2 H5.4 M2.4 7.6 H4.6" stroke-width="0.9"/><circle cx="9.4" cy="8" r="3.2"/></g><circle cx="9.4" cy="8" r="1.5" fill="#555"/></g><rect x="480.30" y="527.50" width="36.20" height="19.40" fill="#c6c6c6"/><g transform="translate(492.00 530.00)"><g fill="none" stroke="#333" stroke-width="1.25"><rect x="0.75" y="0.75" width="10.9" height="10.9"/><path d="M4.4 0.5 V11.9 M8.0 0.5 V11.9 M0.5 4.4 H11.9 M0.5 8.0 H11.9"/></g></g><g transform="translate(529.00 530.70)"><g fill="none" stroke="#5a5a5a" stroke-width="1.1"><rect x="0.55" y="0.55" width="12.1" height="10.5"/><rect x="3.2" y="2.3" width="6.8" height="7" stroke-width="1"/><path d="M4.8 4.3 H8.4 M4.8 5.8 H8.4 M4.8 7.3 H8.4" stroke-width="0.8"/></g></g><g transform="translate(566.00 530.70)"><g fill="none" stroke="#5a5a5a" stroke-width="1.1"><rect x="0.55" y="0.55" width="12.1" height="10.5"/><path d="M0.5 6.4 H7.4 V0.5 M5 0.5 V6.4" stroke-width="1"/></g></g><rect x="596.50" y="536.40" width="6.60" height="1.10" fill="#444"/><rect x="608.50" y="536.60" width="92.00" height="0.90" fill="#a0a0a0"/><rect x="652.20" y="531.20" width="4.60" height="10.20" fill="#666"/><rect x="704.80" y="536.40" width="7.40" height="1.10" fill="#444"/><rect x="708.00" y="532.80" width="1.10" height="8.20" fill="#444"/></svg>
<div class="t" style="top:531px;font-size:10.7px;color:#444;letter-spacing:-1.181px;left:725.30px;">100%</div>
<svg style="left:0;top:0" width="768" height="548"><rect x="0.00" y="0.00" width="1.25" height="548.00" fill="#217346"/><rect x="766.85" y="0.00" width="1.20" height="548.00" fill="#217346"/><rect x="0.00" y="546.70" width="768.00" height="1.30" fill="#217346"/></svg>
</body></html>
